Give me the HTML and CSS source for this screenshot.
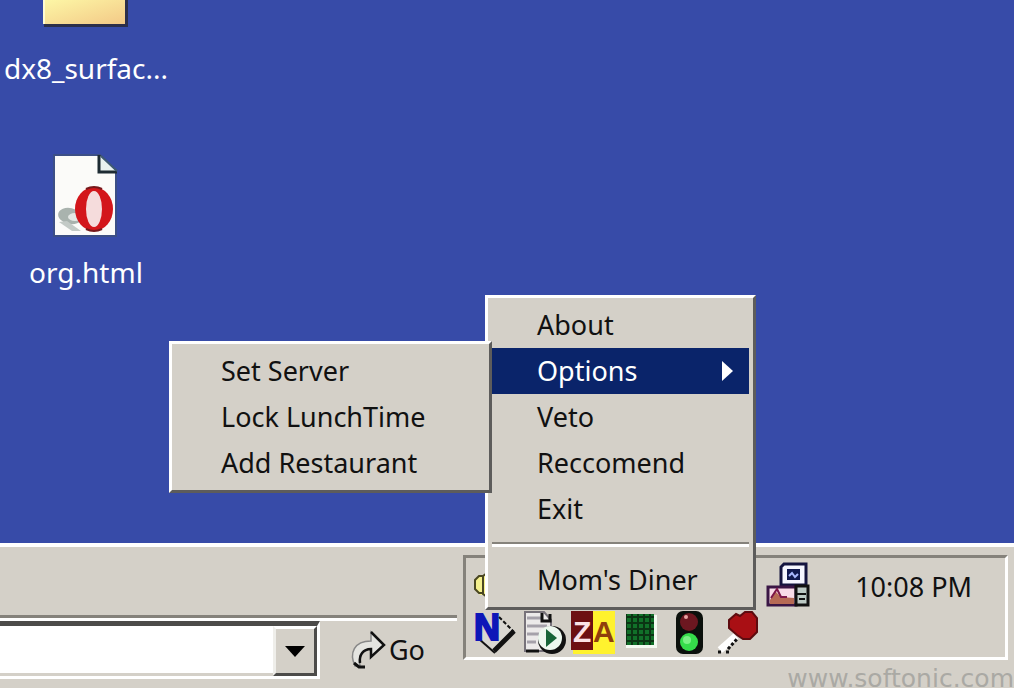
FILE: index.html
```html
<!DOCTYPE html>
<html lang="en">
<head>
  <meta charset="UTF-8" />
  <meta name="viewport" content="width=device-width, initial-scale=1" />
  <title>LunchTime</title>
  <link rel="stylesheet" href="styles.css">
</head>
<body>
  <main class="desktop">
    <a class="shortcut" href="#surface">
      <svg width="88" height="28" viewBox="0 0 88 28">
        <defs>
          <linearGradient id="folder" x1="0" y1="0" x2="1" y2="1">
            <stop offset="0" stop-color="#fdf7a6" />
            <stop offset="1" stop-color="#f3c987" />
          </linearGradient>
        </defs>
        <path d="M2 0h84v27H2z" fill="#2c2f4a" />
        <path d="M1 0h82v24H1z" fill="url(#folder)" />
        <path d="M1 0h2v24H1z" fill="#fffbd0" />
      </svg>
      <span>dx8_surfac...</span>
    </a>
    <a class="shortcut" href="#org">
      <svg width="66" height="84" viewBox="0 0 66 84">
        <path d="M1 1h46l16 16v65H1z" fill="#fbfbf9" stroke="#3c4f86" stroke-width="2" />
        <path d="M46 1v17h18z" fill="#e9f1ef" />
        <path d="M46 1v17h18" fill="none" stroke="#1d2b33" stroke-width="3" />
        <path d="M48 2l16 15" stroke="#3f5a73" stroke-width="2" />
        <ellipse cx="17" cy="62" rx="12" ry="8" fill="#a9b3ae" transform="rotate(12 17 62)" />
        <ellipse cx="22" cy="63" rx="7" ry="4" fill="#e4e8e5" />
        <path d="M14 67l14 10h-9L6 68z" fill="#c3cac6" />
        <ellipse cx="41" cy="55" rx="19" ry="22" fill="#d3161b" />
        <ellipse cx="41" cy="55" rx="8" ry="18" fill="#f5dcdc" />
        <path d="M33 35q8-4 16 0M33 75q8 4 16 0" fill="none" stroke="#76191c" stroke-width="2" />
      </svg>
      <span>org.html</span>
    </a>
  </main>

  <footer class="taskbar">
    <div class="toolbars">
      <div class="task-buttons"></div>
      <form class="address">
        <div class="combo">
          <select aria-label="Address"><option></option></select>
          <span class="combo-arrow">
            <svg width="20" height="11" viewBox="0 0 20 11"><path d="M0 0h20L10 11z" /></svg>
          </span>
        </div>
        <button class="go" type="button">
          <svg width="36" height="40" viewBox="0 0 36 40">
            <path d="M5 36C-1 23 4 11 21 11V2l13 13-13 12v-8c-9 0-13 6-11 17z" fill="#e4e4e0" stroke="#888" stroke-width="1.5" />
            <path d="M21 2l13 13-13 12v-8c-8 0-12 6-11 14" fill="none" stroke="#111" stroke-width="2.5" />
            <path d="M4 33l5 4h6" fill="none" stroke="#111" stroke-width="3" />
          </svg>
          Go
        </button>
      </form>
    </div>

    <div class="tray">
      <div class="tray-row">
        <svg width="44" height="44" viewBox="0 0 44 44">
          <path d="M3 16l4-4h7v20H7l-4-4z" fill="#f4f08d" />
          <path d="M14 10l-4 3v18l4 3M10 13H6l-4 4v9l4 4h4" fill="none" stroke="#4a4722" stroke-width="2" />
        </svg>
        <svg class="network" width="44" height="44" viewBox="0 0 44 44">
          <path d="M18 1h22v21H15V4z" fill="#f5f6ff" stroke="#14143f" stroke-width="3" />
          <path d="M21 6h13v11H21z" fill="#101850" />
          <path d="M23 13l3-3 3 4 3-3" fill="none" stroke="#a9b8ff" stroke-width="2" />
          <path d="M2 24h28v18H2z" fill="#f8dbe7" stroke="#3a1645" stroke-width="3" />
          <path d="M4 37l5-9 6 6 13 1v6H4z" fill="#b66a55" />
          <path d="M5 35l6-9 4 8h6" fill="none" stroke="#7c1749" stroke-width="2" />
          <path d="M30 23h12v19H30z" fill="#bcc9c4" stroke="#111" stroke-width="3" />
          <path d="M29 31h11M33 36h6" stroke="#111" stroke-width="2" />
        </svg>
        <time class="clock">10:08 PM</time>
      </div>
      <div class="tray-row">
        <svg width="44" height="44" viewBox="0 0 44 44">
          <path d="M25 4l17 17-21 20L5 27" fill="#d9d7d2" />
          <path d="M26 6l15 15" stroke="#111" stroke-width="2" stroke-dasharray="4 2" />
          <path d="M41 20L21 40" stroke="#111" stroke-width="5" />
          <path d="M22 42L6 28" stroke="#111" stroke-width="2" />
          <text class="badge-n" x="1" y="29">N</text>
        </svg>
        <svg width="44" height="44" viewBox="0 0 44 44">
          <path d="M3 1h19l7 8v31H3z" fill="#eceaea" stroke="#77727a" stroke-width="2" />
          <path d="M5 7h16M5 15h20M5 23h12M5 31h9" stroke="#a5a1aa" stroke-width="3" />
          <path d="M20 2v8h8V3M4 40h13" fill="none" stroke="#111" stroke-width="3" />
          <circle cx="30" cy="29" r="14" fill="#111" />
          <circle cx="28" cy="27" r="12" fill="#edf8ef" />
          <path d="M24 18l11 9-11 9z" fill="#176538" />
        </svg>
        <svg width="44" height="44" viewBox="0 0 44 44">
          <path d="M0 0h22v39H0z" fill="#6d1012" />
          <path d="M22 0h22v43H2v-4h20z" fill="#fff22e" />
          <text class="badge-za" x="2" y="31" fill="#fbe3e6">Z</text>
          <text class="badge-za" x="22" y="31" fill="#8f3f0c">A</text>
        </svg>
        <svg width="44" height="44" viewBox="0 0 44 44">
          <defs>
            <pattern id="cells" width="6" height="6" patternUnits="userSpaceOnUse">
              <path d="M0 0h6v6H0z" fill="#0b3414" />
              <path d="M1 1h4v4H1z" fill="#117029" />
            </pattern>
          </defs>
          <path d="M6 4h31v33H6z" fill="#f4faf2" />
          <path d="M6 3h28v31H6z" fill="url(#cells)" />
        </svg>
        <svg width="44" height="44" viewBox="0 0 44 44">
          <rect x="7" y="0" width="27" height="43" rx="7" fill="#0b100c" />
          <circle cx="20" cy="11" r="9" fill="#6c1720" />
          <circle cx="17" cy="6" r="2" fill="#e9a2a2" />
          <circle cx="20" cy="31" r="9" fill="#35dc4a" />
          <circle cx="18" cy="29" r="4" fill="#7af184" />
        </svg>
        <svg width="44" height="44" viewBox="0 0 44 44">
          <path d="M2 39l16-14" stroke="#fff" stroke-width="7" />
          <path d="M10 38l10-11" stroke="#111" stroke-width="3" stroke-dasharray="3 2" />
          <path d="M0 41h3M8 41h3" stroke="#111" stroke-width="3" />
          <path d="M18 3l4 2 5-4h7l5 6v14l-7 7h-7l-6-4-8-7V9z" fill="#a90f14" stroke="#5e0b0f" stroke-width="2" />
        </svg>
      </div>

      <ul class="menu tray-menu" role="menu">
        <li><button type="button">About</button></li>
        <li>
          <button class="active" type="button" aria-haspopup="true" aria-expanded="true">
            Options
            <svg width="11" height="20" viewBox="0 0 11 20"><path d="M0 0l11 10L0 20z" fill="#fff" /></svg>
          </button>
          <ul class="menu submenu" role="menu">
            <li><button type="button">Set Server</button></li>
            <li><button type="button">Lock LunchTime</button></li>
            <li><button type="button">Add Restaurant</button></li>
          </ul>
        </li>
        <li><button type="button">Veto</button></li>
        <li><button type="button">Reccomend</button></li>
        <li><button type="button">Exit</button></li>
        <li class="separator" role="separator"></li>
        <li><button type="button">Mom's Diner</button></li>
      </ul>
    </div>
    <span class="watermark">www.softonic.com</span>
  </footer>
</body>
</html>
```
FILE: styles.css
```css
:root {
  --desktop: #374ba8;
  --face: #d4d0c8;
  --shadow: #85827b;
  --dark: #4c4b49;
  --highlight: #0a246a;
}

* {
  box-sizing: border-box;
}

body {
  margin: 0;
  min-height: 100vh;
  padding: 0 6px 5px 0;
  display: flex;
  flex-direction: column;
  background: #fff;
  color: #111;
  font-family: "Noto Sans", Tahoma, sans-serif;
  font-size: 27px;
  line-height: 32px;
  overflow: hidden;
}

button,
select {
  font: inherit;
  color: inherit;
  border: none;
  border-radius: 0;
  background: none;
}

svg {
  display: block;
  flex: none;
  overflow: visible;
}

/* Desktop */
.desktop {
  flex: 1;
  display: flex;
  flex-direction: column;
  align-items: flex-start;
  gap: 70px;
  background: var(--desktop);
}

.shortcut {
  width: 172px;
  display: flex;
  flex-direction: column;
  align-items: center;
  gap: 18px;
  color: #fff;
  font-size: 28px;
  text-decoration: none;
  white-space: nowrap;
}

.shortcut:first-child {
  gap: 24px;
}

/* Taskbar */
.taskbar {
  position: relative;
  display: flex;
  gap: 6px;
  padding-right: 6px;
  background: var(--face);
  border-top: 4px solid #fff;
}

.toolbars {
  flex: 1;
  display: flex;
  flex-direction: column;
}

.task-buttons {
  flex: 1;
  border-bottom: 3px solid var(--shadow);
}

.address {
  display: flex;
  align-items: stretch;
  gap: 30px;
  margin-bottom: 9px;
  border-top: 3px solid #fff;
}

.combo {
  flex: 0 0 70%;
  display: flex;
  height: 58px;
  border-top: 5px solid var(--dark);
  border-right: 3px solid #fff;
  border-bottom: 3px solid #fff;
  background: #fff;
}

.combo select {
  flex: 1;
  appearance: none;
  border-bottom: 3px solid var(--face);
}

.combo-arrow {
  width: 44px;
  display: flex;
  align-items: center;
  justify-content: center;
  background: var(--face);
  border: 3px solid var(--dark);
  border-top-color: #fff;
  border-left-color: #efeeea;
}

.go {
  display: flex;
  align-items: center;
  gap: 3px;
  padding: 0;
}

/* Notification area */
.tray {
  position: relative;
  flex: 0 0 545px;
  display: flex;
  flex-direction: column;
  gap: 4px;
  margin: 8px 0 28px;
  padding: 5px 7px 2px;
  border: 3px solid #fff;
  border-top-color: var(--shadow);
  border-left-color: var(--shadow);
}

.tray-row {
  display: flex;
  align-items: center;
  gap: 5px;
}

.network {
  margin-left: auto;
}

.clock {
  padding: 4px 26px 0 40px;
}

.badge-n {
  font: bold 36px "Liberation Sans", sans-serif;
  fill: #0d16b8;
  stroke: #0d16b8;
  stroke-width: 2px;
}

.badge-za {
  font: bold 30px "Liberation Sans", sans-serif;
}

.watermark {
  position: absolute;
  right: 0;
  bottom: -5px;
  font: 25px/28px "DejaVu Sans", Verdana, sans-serif;
  color: #aaa9a4;
}

/* Menus */
.menu {
  position: absolute;
  margin: 0;
  padding: 4px;
  list-style: none;
  background: var(--face);
  border: 3px solid #fff;
  border-right-color: #5d5c5b;
  border-bottom-color: #5d5c5b;
}

.menu li {
  position: relative;
}

.menu button {
  width: 100%;
  height: 46px;
  display: flex;
  align-items: center;
  justify-content: space-between;
  padding: 0 16px 0 45px;
  text-align: left;
  white-space: nowrap;
}

.menu .active {
  background: var(--highlight);
  color: #fff;
}

.tray-menu {
  left: 19px;
  bottom: 47px;
  width: 271px;
}

.submenu {
  right: 100%;
  top: -7px;
  width: 323px;
}

.separator {
  height: 25px;
  padding-top: 10px;
}

.separator::before {
  content: "";
  display: block;
  border-top: 2px solid var(--shadow);
  border-bottom: 3px solid #fff;
}
```
